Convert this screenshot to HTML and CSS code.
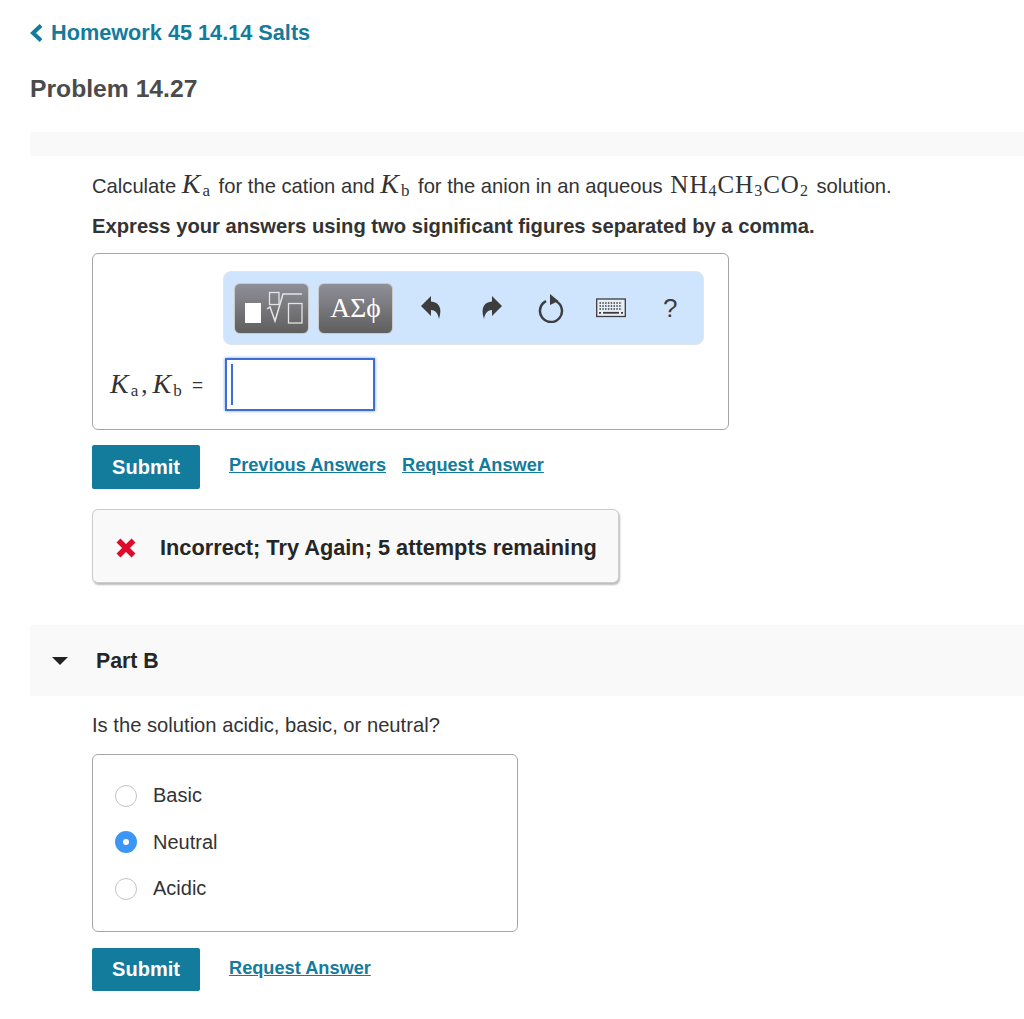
FILE: index.html
```html
<!DOCTYPE html>
<html lang="en">
<head>
  <meta charset="UTF-8">
  <title>Problem 14.27</title>
  <link rel="stylesheet" href="styles.css">
</head>
<body>

<header class="pageHead">
  <a class="backLink" href="#">
    <svg class="backIcon" viewBox="0 0 13 18" width="13" height="18"><path d="M11 1.500 L3 9 L11 16.500" fill="none" stroke="#137b9c" stroke-width="4"/></svg>
    Homework 45 14.14 Salts
  </a>
  <h1>Problem 14.27</h1>
</header>

<div class="band bandTop"></div>

<section class="part">
  <p class="question">Calculate <span class="math"><i>K</i><sub>a</sub></span> for the cation and <span class="math"><i>K</i><sub>b</sub></span> for the anion in an aqueous <span class="math formula">NH<sub>4</sub>CH<sub>3</sub>CO<sub>2</sub></span> solution.</p>
  <p class="instruction">Express your answers using two significant figures separated by a comma.</p>

  <div class="answerBox">
    <div class="toolbar">
      <button class="tplBtn">
        <svg viewBox="1 1 73 49" width="73" height="49">
          <rect x="11" y="20" width="16" height="20" fill="#fff"/>
          <rect x="35.500" y="9.500" width="9.500" height="12" fill="none" stroke="#e5e5e5" stroke-width="1.300"/>
          <path d="M33 26 L36 24 L41 38 L49 11 H68" fill="none" stroke="#e5e5e5" stroke-width="1.500"/>
          <rect x="54.500" y="20.500" width="13.500" height="19.500" fill="none" stroke="#e5e5e5" stroke-width="1.300"/>
        </svg>
      </button>
      <button class="tplBtn symBtn">ΑΣϕ</button>
      <svg class="tool toolUndo" viewBox="0 0 26 28" width="26" height="28"><path d="M2 12 L12 2 V7.500 C19 8 24 13 20 25 C19 19 16 16 12 16 V22 Z" fill="#3d3d3d"/></svg>
      <svg class="tool toolRedo" viewBox="0 0 26 28" width="26" height="28"><path d="M24 12 L14 2 V7.500 C7 8 2 13 6 25 C7 19 10 16 14 16 V22 Z" fill="#3d3d3d"/></svg>
      <svg class="tool toolReset" viewBox="0 0 28 30" width="28" height="30"><path d="M9 8.200 A11 11 0 1 0 19.500 8.500" fill="none" stroke="#3d3d3d" stroke-width="2.500"/><path d="M13 1 L21.500 8 L13 12 Z" fill="#3d3d3d"/></svg>
      <svg class="tool toolKeys" viewBox="0 0 30 20" width="30" height="20">
        <rect x="0.700" y="1" width="28.600" height="17.500" fill="#e6eef6" stroke="#3d3d3d" stroke-width="1.300"/>
        <path d="M3.500 5 H26 M3.500 8 H26 M3.500 11 H26" stroke="#3d3d3d" stroke-width="1.500" stroke-dasharray="1.500 1.300"/>
        <path d="M7 14.800 H23" stroke="#3d3d3d" stroke-width="1.800"/>
        <path d="M3 14.800 H5 M25 14.800 H27" stroke="#3d3d3d" stroke-width="1.800"/>
      </svg>
      <span class="tool toolHelp">?</span>
    </div>
    <div class="answerRow">
      <span class="math answerLabel"><i>K</i><sub>a</sub><span class="comma">,</span><i>K</i><sub>b</sub></span>
      <span class="equals">=</span>
      <div class="mathInput"><span class="caret"></span></div>
    </div>
  </div>

  <div class="actions">
    <button class="submit">Submit</button>
    <a href="#">Previous Answers</a>
    <a href="#">Request Answer</a>
  </div>

  <div class="feedback">
    <svg viewBox="0 0 22 22" width="22" height="22"><path d="M3.500 3.500 L18.500 18.500 M18.500 3.500 L3.500 18.500" stroke="#de0a2b" stroke-width="5.500"/></svg>
    <span>Incorrect; Try Again; 5 attempts remaining</span>
  </div>
</section>

<div class="band bandPart">
  <span class="arrowDown"></span>
  <h2>Part B</h2>
</div>

<section class="part partB">
  <p class="question">Is the solution acidic, basic, or neutral?</p>
  <div class="choiceBox">
    <label class="choice"><span class="radio"></span>Basic</label>
    <label class="choice"><span class="radio checked"></span>Neutral</label>
    <label class="choice"><span class="radio"></span>Acidic</label>
  </div>
  <div class="actions">
    <button class="submit">Submit</button>
    <a href="#">Request Answer</a>
  </div>
</section>

</body>
</html>
```

FILE: styles.css
```css
body {
  font-family: "Liberation Sans", Arial, sans-serif;
  color: #333;
  background-color: #fff;
  margin: 0;
  overflow-x: hidden;
}

a {
  color: #137b9c;
}

p {
  margin: 0;
}

.pageHead {
  padding: 20px 0 0 30px;
}

.backLink {
  display: flex;
  align-items: center;
  gap: 8px;
  height: 26px;
  font-size: 21.700px;
  font-weight: bold;
  text-decoration: none;
}

.backIcon {
  flex: none;
}

h1 {
  margin: 29px 0 0;
  font-size: 24.700px;
  line-height: 28px;
  color: #4b4b4b;
}

.band {
  margin-left: 30px;
  background-color: #f9f9f9;
}

.bandTop {
  height: 24px;
  margin-top: 29px;
}

.part {
  padding-left: 92px;
}

.question {
  margin-top: 16px;
  font-size: 20.200px;
  line-height: 28px;
  height: 28px;
}

.instruction {
  margin-top: 13px;
  font-size: 20.200px;
  font-weight: bold;
  line-height: 26px;
}

.math {
  font-family: "Liberation Serif", serif;
  font-size: 25px;
  line-height: 20px;
  padding: 0 3px 0 0;
}

.math i {
  font-size: 28px;
  line-height: 20px;
  letter-spacing: 2px;
}

.math sub {
  font-size: 17px;
  line-height: 0;
  vertical-align: -3px;
}

.formula {
  padding: 0 2px;
  letter-spacing: 1px;
}

.formula sub {
  font-size: 16px;
}

.answerBox {
  box-sizing: border-box;
  width: 637px;
  height: 177px;
  margin-top: 14px;
  padding-top: 17px;
  border: 1px solid #a5a5a5;
  border-radius: 6px;
}

.toolbar {
  box-sizing: border-box;
  display: flex;
  align-items: center;
  width: 481px;
  height: 74px;
  margin-left: 130px;
  padding-left: 10px;
  background-color: #cfe5fd;
  border: 1px solid #e2e6ea;
  border-radius: 8px;
}

.tplBtn {
  box-sizing: border-box;
  display: flex;
  align-items: center;
  justify-content: center;
  width: 75px;
  height: 51px;
  margin-right: 9px;
  padding: 0;
  border: 1px solid #c9c9c9;
  border-radius: 6px;
  background: linear-gradient(#8f8f98, #5f5f5f);
}

.symBtn {
  font-family: "Liberation Serif", serif;
  font-size: 27.500px;
  color: #fff;
}

.tool {
  flex: none;
}

.toolUndo {
  margin-left: 17px;
}

.toolRedo {
  margin-left: 33px;
}

.toolReset {
  margin-left: 33px;
}

.toolKeys {
  margin-left: 31px;
}

.toolHelp {
  margin-left: 37px;
  font-size: 26px;
  color: #3d3d3d;
}

.answerRow {
  display: flex;
  align-items: center;
  height: 53px;
  margin-top: 13px;
  padding-left: 17px;
  color: #333;
}

.answerLabel {
  flex: none;
  padding: 0;
  width: 82px;
  white-space: nowrap;
}

.comma {
  margin: 0 5px 0 3px;
}

.equals {
  flex: none;
  width: 33px;
  font-size: 19px;
}

.mathInput {
  box-sizing: border-box;
  width: 150px;
  height: 53px;
  padding: 4px;
  border: 2px solid #3b6fd4;
  box-shadow: 0 0 3px #6f9be8;
  background-color: #fff;
}

.caret {
  display: block;
  width: 2px;
  height: 41px;
  background-color: #3b6fd4;
}

.actions {
  display: flex;
  align-items: center;
  margin-top: 15px;
  font-size: 18.200px;
  font-weight: bold;
}

.actions a {
  margin-right: 16px;
  margin-bottom: 3px;
}

.submit {
  width: 108px;
  height: 44px;
  margin-right: 29px;
  padding: 0;
  font-family: inherit;
  font-size: 20px;
  font-weight: bold;
  color: #fff;
  background-color: #137b9c;
  border: none;
  border-radius: 2px;
}

.feedback {
  box-sizing: border-box;
  display: flex;
  align-items: center;
  gap: 23px;
  width: 527px;
  height: 74px;
  margin-top: 20px;
  padding: 3px 0 0 22px;
  font-size: 21.750px;
  font-weight: bold;
  color: #262626;
  background-color: #f9f9f9;
  border: 1px solid #ccc;
  border-radius: 6px;
  box-shadow: 1px 2px 2px #bbb;
}

.bandPart {
  display: flex;
  align-items: center;
  height: 71px;
  margin-top: 42px;
  padding-left: 22px;
}

.arrowDown {
  width: 0;
  height: 0;
  border-left: 8px solid transparent;
  border-right: 8px solid transparent;
  border-top: 8px solid #222;
}

h2 {
  margin: 2px 0 0 28px;
  font-size: 21.300px;
  color: #262626;
}

.partB .question {
  margin-top: 15px;
}

.partB .actions {
  margin-top: 16px;
}

.partB .submit {
  height: 43px;
}

.choiceBox {
  box-sizing: border-box;
  display: flex;
  flex-direction: column;
  gap: 10.500px;
  width: 426px;
  height: 178px;
  margin-top: 15px;
  padding: 22.500px 0 0 22px;
  border: 1px solid #a5a5a5;
  border-radius: 6px;
}

.choice {
  display: flex;
  align-items: center;
  gap: 16px;
  height: 36px;
  font-size: 20px;
}

.radio {
  box-sizing: border-box;
  width: 22px;
  height: 22px;
  border: 1px solid #c4c4c4;
  border-radius: 50%;
  background-color: #fff;
}

.radio.checked {
  border: 8px solid #3d96f5;
}
```
